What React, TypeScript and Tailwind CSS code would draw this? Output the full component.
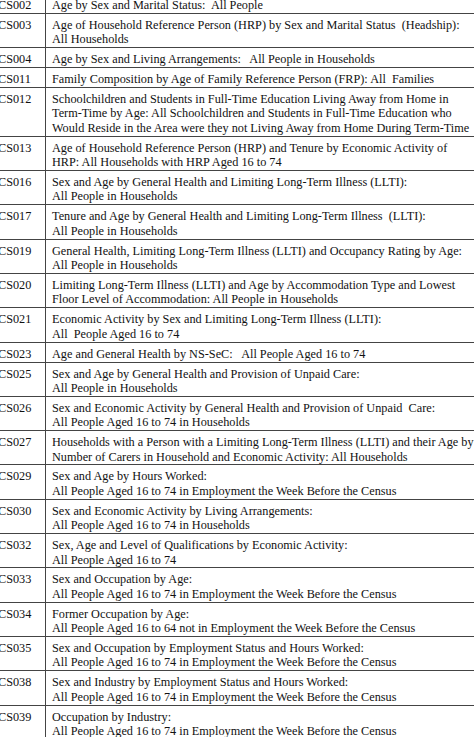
import React from 'react'

const rows: [string, string[]][] = [
  ['CS002', ['Age by Sex and Marital Status:  All People']],
  ['CS003', ['Age of Household Reference Person (HRP) by Sex and Marital Status  (Headship):', 'All Households']],
  ['CS004', ['Age by Sex and Living Arrangements:   All People in Households']],
  ['CS011', ['Family Composition by Age of Family Reference Person (FRP): All  Families']],
  ['CS012', [
    'Schoolchildren and Students in Full-Time Education Living Away from Home in',
    'Term-Time by Age: All Schoolchildren and Students in Full-Time Education who',
    'Would Reside in the Area were they not Living Away from Home During Term-Time',
  ]],
  ['CS013', ['Age of Household Reference Person (HRP) and Tenure by Economic Activity of', 'HRP: All Households with HRP Aged 16 to 74']],
  ['CS016', ['Sex and Age by General Health and Limiting Long-Term Illness (LLTI):', 'All People in Households']],
  ['CS017', ['Tenure and Age by General Health and Limiting Long-Term Illness  (LLTI):', 'All People in Households']],
  ['CS019', ['General Health, Limiting Long-Term Illness (LLTI) and Occupancy Rating by Age:', 'All People in Households']],
  ['CS020', ['Limiting Long-Term Illness (LLTI) and Age by Accommodation Type and Lowest', 'Floor Level of Accommodation: All People in Households']],
  ['CS021', ['Economic Activity by Sex and Limiting Long-Term Illness (LLTI):', 'All  People Aged 16 to 74']],
  ['CS023', ['Age and General Health by NS-SeC:   All People Aged 16 to 74']],
  ['CS025', ['Sex and Age by General Health and Provision of Unpaid Care:', 'All People in Households']],
  ['CS026', ['Sex and Economic Activity by General Health and Provision of Unpaid  Care:', 'All People Aged 16 to 74 in Households']],
  ['CS027', ['Households with a Person with a Limiting Long-Term Illness (LLTI) and their Age by', 'Number of Carers in Household and Economic Activity: All Households']],
  ['CS029', ['Sex and Age by Hours Worked:', 'All People Aged 16 to 74 in Employment the Week Before the Census']],
  ['CS030', ['Sex and Economic Activity by Living Arrangements:', 'All People Aged 16 to 74 in Households']],
  ['CS032', ['Sex, Age and Level of Qualifications by Economic Activity:', 'All People Aged 16 to 74']],
  ['CS033', ['Sex and Occupation by Age:', 'All People Aged 16 to 74 in Employment the Week Before the Census']],
  ['CS034', ['Former Occupation by Age:', 'All People Aged 16 to 64 not in Employment the Week Before the Census']],
  ['CS035', ['Sex and Occupation by Employment Status and Hours Worked:', 'All People Aged 16 to 74 in Employment the Week Before the Census']],
  ['CS038', ['Sex and Industry by Employment Status and Hours Worked:', 'All People Aged 16 to 74 in Employment the Week Before the Census']],
  ['CS039', ['Occupation by Industry:', 'All People Aged 16 to 74 in Employment the Week Before the Census']],
]

export default function App() {
  return (
    <div className="w-[474px] h-[737px] overflow-hidden bg-white text-[#111] text-[12.25px] leading-[14.4px] font-['Liberation_Serif',serif]">
      <div className="-mt-[6px] -ml-[2px]">
        {rows.map(([code, lines]) => (
          <div key={code} className="flex border-b border-[#444]">
            <div className="w-[48px] shrink-0 border-r border-[#444] pt-[4px]">{code}</div>
            <div className="flex-1 pl-[6px] pt-[4px] pb-[0.5px]">
              {lines.map((l, i) => (
                <div key={i} className="whitespace-pre">{l}</div>
              ))}
            </div>
          </div>
        ))}
      </div>
    </div>
  )
}
